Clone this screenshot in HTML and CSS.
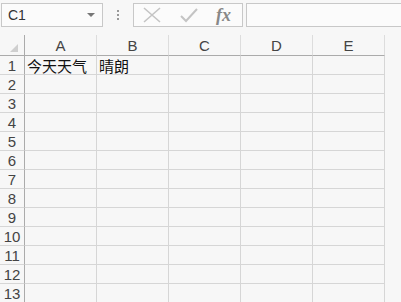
FILE: index.html
```html
<!DOCTYPE html>
<html>
<head>
    <title>Sheet</title>
    <link rel="stylesheet" href="styles.css">
</head>
<body>
    <!-- 编辑栏 -->
    <div class="toolbar">
        <div class="name-box">
            <span class="name-text">C1</span>
            <span class="drop"></span>
        </div>
        <div class="dots"><i></i><i></i><i></i></div>
        <div class="tool-box">
            <svg class="tool" width="18" height="16" viewBox="0 0 18 16">
                <path d="M1 1 L17 15 M17 1 L1 15" stroke="#c4c4c4" stroke-width="1.6" fill="none"/>
            </svg>
            <svg class="tool" width="18" height="16" viewBox="0 0 18 16">
                <path d="M1 9 L6 14 L17 2" stroke="#c4c4c4" stroke-width="2" fill="none"/>
            </svg>
            <span class="fx">fx</span>
        </div>
        <div class="formula"></div>
    </div>

    <!-- 表格 -->
    <div class="sheet" id="sheet">
        <div class="row head">
            <div class="num corner"><span class="tri"></span></div>
            <div class="col">A</div>
            <div class="col">B</div>
            <div class="col">C</div>
            <div class="col">D</div>
            <div class="col">E</div>
        </div>
        <div class="row">
            <div class="num">1</div>
            <div class="col cell">今天天气</div>
            <div class="col cell">晴朗</div>
            <div class="col"></div>
            <div class="col"></div>
            <div class="col"></div>
        </div>
    </div>

    <script>
        // 生成空行
        const sheet = document.getElementById('sheet');
        for (let i = 2; i <= 13; i++) {
            const row = document.createElement('div');
            row.className = 'row';
            row.innerHTML = `<div class="num">${i}</div><div class="col"></div><div class="col"></div><div class="col"></div><div class="col"></div><div class="col"></div>`;
            sheet.appendChild(row);
        }
    </script>
</body>
</html>
```

FILE: styles.css
```css
body {
    margin: 0;
    background: #f7f7f7;
    font-family: "Noto Sans CJK SC", "Noto Sans", sans-serif;
    overflow: hidden;
    width: 401px;
    height: 302px;
}

.toolbar {
    height: 35px;
    box-sizing: border-box;
    padding-top: 3px;
    display: flex;
    align-items: flex-start;
}

.name-box {
    width: 102px;
    height: 24px;
    margin-left: 1px;
    box-sizing: border-box;
    border: 1px solid #c8c8c8;
    background: #fbfbfb;
    display: flex;
    align-items: center;
    justify-content: space-between;
    padding: 0 7px 0 6px;
}

.name-text {
    font-family: "Liberation Sans", sans-serif;
    font-size: 14px;
    color: #333;
}

.drop {
    width: 0;
    height: 0;
    border-left: 4px solid transparent;
    border-right: 4px solid transparent;
    border-top: 4px solid #777;
}

.dots {
    width: 30px;
    height: 24px;
    display: flex;
    flex-direction: column;
    align-items: center;
    justify-content: center;
    gap: 2px;
}

.dots i {
    width: 2px;
    height: 2px;
    background: #999;
}

.tool-box {
    width: 110px;
    height: 24px;
    box-sizing: border-box;
    border: 1px solid #c8c8c8;
    background: #fbfbfb;
    display: flex;
    align-items: center;
    padding-left: 9px;
    gap: 19px;
}

.fx {
    font-family: "Liberation Serif", serif;
    font-style: italic;
    font-weight: bold;
    font-size: 18px;
    color: #888;
    margin-left: -1px;
}

.formula {
    flex: 1;
    height: 24px;
    margin-left: 3px;
    box-sizing: border-box;
    border: 1px solid #c8c8c8;
    border-right: none;
    background: #fbfbfb;
}

.row {
    display: flex;
    height: 19px;
}

.row.head {
    height: 21px;
}

.num,
.col {
    box-sizing: border-box;
    border-bottom: 1px solid #d6d6d6;
    border-right: 1px solid #d6d6d6;
    white-space: nowrap;
    flex-shrink: 0;
}

.num {
    width: 25px;
    border-right-color: #ababab;
    font-family: "Liberation Sans", sans-serif;
    font-size: 15px;
    color: #444;
    text-align: center;
    line-height: 19px;
}

.col {
    width: 72px;
}

.head .num,
.head .col {
    border-bottom-color: #ababab;
}

.head .col {
    border-right-color: #dddddd;
    font-family: "Liberation Sans", sans-serif;
    font-size: 15px;
    color: #444;
    text-align: center;
    line-height: 22px;
}

.corner {
    position: relative;
}

.tri {
    position: absolute;
    right: 6px;
    bottom: 3px;
    width: 0;
    height: 0;
    border-left: 8px solid transparent;
    border-bottom: 8px solid #cfcfcf;
}

.cell {
    font-size: 15px;
    color: #111;
    padding-left: 2px;
    line-height: 19px;
}
```
